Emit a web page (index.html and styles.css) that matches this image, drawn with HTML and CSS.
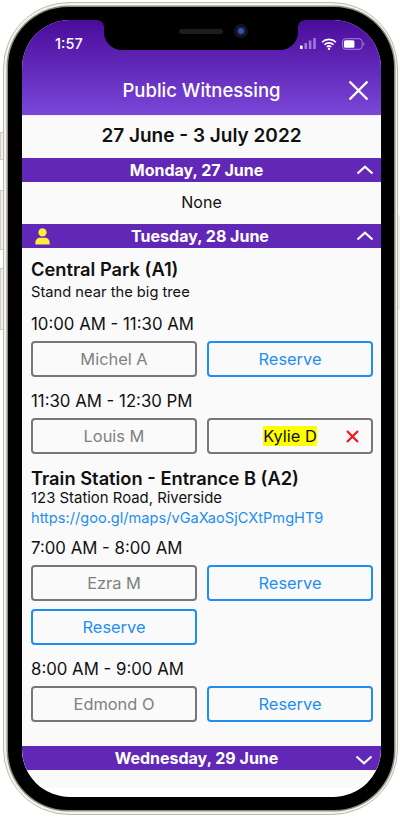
FILE: index.html
```html
<!DOCTYPE html>
<html lang="en">
<head>
<meta charset="utf-8">
<title>Public Witnessing</title>
<link rel="stylesheet" href="styles.css">
</head>
<body>
<span class="side-btn side-a"></span>
<span class="side-btn side-b"></span>
<span class="side-btn side-c"></span>
<span class="side-btn side-d"></span>
<div class="phone">
  <div class="bezel">
    <div class="screen">
      <header class="appbar">
        <div class="status">
          <span class="clock">1:57</span>
          <span class="status-icons">
            <svg class="signal" viewBox="0 0 16 11" width="16" height="11"><rect x="0" y="7.5" width="2.6" height="3.5" rx=".6" fill="#fff"/><rect x="4.4" y="5" width="2.6" height="6" rx=".6" fill="#9c7bd6"/><rect x="8.8" y="2.5" width="2.6" height="8.5" rx=".6" fill="#9c7bd6"/><rect x="13.2" y="0" width="2.6" height="11" rx=".6" fill="#9c7bd6"/></svg>
            <svg class="wifi" viewBox="0 0 16 12" width="16" height="12"><path d="M1 4.2a10 10 0 0 1 14 0M3.4 6.7a6.6 6.6 0 0 1 9.2 0M5.7 9a3.3 3.3 0 0 1 4.6 0" fill="none" stroke="#fff" stroke-width="1.6"/><circle cx="8" cy="10.7" r="1.2" fill="#fff"/></svg>
            <svg class="battery" viewBox="0 0 24 12" width="23" height="12"><rect x=".5" y=".5" width="20.5" height="11" rx="3.2" fill="none" stroke="#a88ae0"/><rect x="2" y="2" width="11" height="8" rx="1.6" fill="#fff"/><path d="M22.3 4.2a2 2 0 0 1 0 3.6z" fill="#a88ae0"/></svg>
          </span>
        </div>
        <div class="notch">
          <span class="speaker"></span>
          <span class="camera"></span>
        </div>
        <div class="titlebar">
          <h1 class="title">Public Witnessing</h1>
          <svg class="close" viewBox="0 0 21 21" width="21" height="21"><path d="M1.5 1.5l18 18M19.5 1.5l-18 18" stroke="#fff" stroke-width="2.4" fill="none"/></svg>
        </div>
      </header>
      <main class="content">
        <h2 class="week">27 June - 3 July 2022</h2>

        <div class="day day-solo">
          <span class="day-name">Monday, 27 June</span>
          <svg class="chev" viewBox="0 0 18 10" width="18" height="10"><path d="M1.5 8.5L9 1.8l7.5 6.7" stroke="#fff" stroke-width="2.2" fill="none"/></svg>
        </div>
        <p class="none">None</p>

        <div class="day">
          <svg class="person" viewBox="0 0 16 18" width="15" height="17"><circle cx="8" cy="4.6" r="4.4" fill="#ffeb3b"/><path d="M0.4 17.6v-2.4c0-3 2.4-5 5-5h5.2c2.6 0 5 2 5 5v2.4z" fill="#ffeb3b"/></svg>
          <span class="day-name">Tuesday, 28 June</span>
          <svg class="chev" viewBox="0 0 18 10" width="18" height="10"><path d="M1.5 8.5L9 1.8l7.5 6.7" stroke="#fff" stroke-width="2.2" fill="none"/></svg>
        </div>

        <section class="place">
          <h3 class="place-name">Central Park (A1)</h3>
          <p class="place-note">Stand near the big tree</p>
          <p class="time time-a">10:00 AM - 11:30 AM</p>
          <div class="slots">
            <div class="slot taken">Michel A</div>
            <div class="slot open">Reserve</div>
          </div>
          <p class="time time-b">11:30 AM - 12:30 PM</p>
          <div class="slots">
            <div class="slot taken">Louis M</div>
            <div class="slot mine"><mark class="me">Kylie D</mark><svg class="cancel" viewBox="0 0 13 13" width="13" height="13"><path d="M1 1l11 11M12 1L1 12" stroke="#f01818" stroke-width="2.2" fill="none"/></svg></div>
          </div>
        </section>

        <section class="place place-two">
          <h3 class="place-name">Train Station - Entrance B (A2)</h3>
          <p class="address">123 Station Road, Riverside</p>
          <a class="map-link" href="#">https://goo.gl/maps/vGaXaoSjCXtPmgHT9</a>
          <p class="time time-c">7:00 AM - 8:00 AM</p>
          <div class="slots">
            <div class="slot taken">Ezra M</div>
            <div class="slot open">Reserve</div>
            <div class="slot open">Reserve</div>
          </div>
          <p class="time time-d">8:00 AM - 9:00 AM</p>
          <div class="slots">
            <div class="slot taken">Edmond O</div>
            <div class="slot open">Reserve</div>
          </div>
        </section>

        <div class="day day-solo day-last">
          <span class="day-name">Wednesday, 29 June</span>
          <svg class="chev chev-down" viewBox="0 0 18 10" width="18" height="10"><path d="M1.5 1.5L9 8.2l7.5-6.7" stroke="#fff" stroke-width="2.2" fill="none"/></svg>
        </div>
      </main>
    </div>
  </div>
</div>
</body>
</html>
```
FILE: styles.css
```css
* { box-sizing: border-box; }
html, body { margin: 0; padding: 0; }
body {
  width: 400px;
  height: 817px;
  background: #fff;
  overflow: hidden;
  position: relative;
  font-family: Inter, "Liberation Sans", sans-serif;
}
.side-btn { position: absolute; left: 0; width: 4px; background: #f1f0ec; border: 1px solid #cfcdc7; border-right: 0; }
.side-a { top: 132px; height: 28px; }
.side-b { top: 190px; height: 60px; }
.side-c { top: 268px; height: 62px; }
.side-d { left: 397px; top: 215px; height: 95px; border: 0; border-left: 1px solid #d6d4ce; }
.phone {
  position: relative;
  margin: 2px 2px 0 3px;
  width: 395px;
  height: 813px;
  padding: 4px 3px 4px 4px;
  border-radius: 66px;
  background: #f4f3ef;
  border: 1px solid #bdbab2;
}
.bezel {
  height: 100%;
  border-radius: 60px;
  padding: 13px 13px 13px 14px;
  background: #000;
  box-shadow: 0 0 0 1.5px #8f8b80;
}
.screen {
  height: 100%;
  border-radius: 48px;
  overflow: hidden;
  background: #fff;
  display: flex;
  flex-direction: column;
  position: relative;
}
.appbar {
  height: 95px;
  flex: none;
  background: linear-gradient(180deg, #4a0b9a 0%, #7a47d9 100%);
  color: #fff;
  position: relative;
}
.status {
  display: flex;
  justify-content: space-between;
  align-items: center;
  height: 33px;
  padding: 14px 16px 0 33px;
}
.clock { font-size: 14.5px; font-weight: 500; line-height: 19px; }
.status-icons { display: flex; align-items: center; gap: 5px; }
.notch {
  position: absolute;
  left: 82px;
  top: 0;
  width: 194px;
  height: 30px;
  background: #000;
  border-radius: 0 0 18px 18px;
}
.notch::before, .notch::after {
  content: "";
  position: absolute;
  top: 0;
  width: 7px;
  height: 7px;
}
.notch::before { left: -7px; background: radial-gradient(circle at 0 100%, transparent 6.5px, #000 7px); }
.notch::after { right: -7px; background: radial-gradient(circle at 100% 100%, transparent 6.5px, #000 7px); }
.speaker { position: absolute; left: 75px; top: 9px; width: 44px; height: 5px; border-radius: 3px; background: #1c1c22; }
.camera { position: absolute; left: 130px; top: 4px; width: 14px; height: 14px; border-radius: 50%; background: radial-gradient(circle, #3656b5 0 20%, #10121c 45%, #17181f 100%); }
.titlebar {
  position: relative;
  height: 42px;
  margin-top: 16px;
  display: flex;
  align-items: center;
  justify-content: center;
}
.title { margin: 0; font-size: 18.5px; font-weight: 500; }
.close { position: absolute; right: 12px; top: 11px; }
.content { flex: none; height: 673px; background: #fafafa; overflow: hidden; border-top: 1px solid #eee; }
.week { margin: 0; height: 42px; line-height: 40px; text-align: center; font-size: 19px; font-weight: 600; color: #111; }
.day {
  height: 24px;
  padding-right: 3px;
  background: #6128b8;
  color: #fff;
  font-size: 16px;
  font-weight: 700;
  display: flex;
  align-items: center;
  justify-content: center;
  position: relative;
}
.day-solo { padding-right: 10px; }
.chev { position: absolute; right: 7px; top: 7px; }
.chev-down { right: 8px; top: 9px; }
.person { position: absolute; left: 13px; top: 4px; }
.none { margin: 0; height: 42px; line-height: 40px; text-align: center; font-size: 16px; color: #111; }
.place { padding: 10px 8px 0 9px; color: #111; }
.place-two { padding-top: 13px; }
.place-name { margin: 0; font-size: 18.3px; line-height: 22px; font-weight: 600; }
.place-note { margin: 2px 0 0; font-size: 14.7px; line-height: 20px; }
.address { margin: 0; font-size: 14.9px; line-height: 18px; }
.map-link { display: block; font-size: 14.6px; line-height: 22px; color: #1e8ef0; text-decoration: none; }
.time { margin: 0; font-size: 16.8px; line-height: 20px; padding-bottom: 7px; }
.time-a { padding-top: 12px; }
.time-b { padding-top: 14px; }
.time-c { padding-top: 9px; }
.time-d { padding-top: 14px; }
.slots { display: grid; grid-template-columns: 166px 166px; gap: 8px 10px; }
.slot {
  height: 36px;
  border-radius: 4px;
  display: flex;
  align-items: center;
  justify-content: center;
  font-size: 16.4px;
  position: relative;
}
.taken { border: 2px solid #777; color: #808080; }
.open { border: 2px solid #1e8ef0; color: #1e8ef0; }
.mine { border: 2px solid #777; color: #111; }
.me { background: #ffff00; color: #111; line-height: 20px; }
.cancel { position: absolute; right: 12px; top: 10px; }
.day-last { margin-top: 24px; }
```
